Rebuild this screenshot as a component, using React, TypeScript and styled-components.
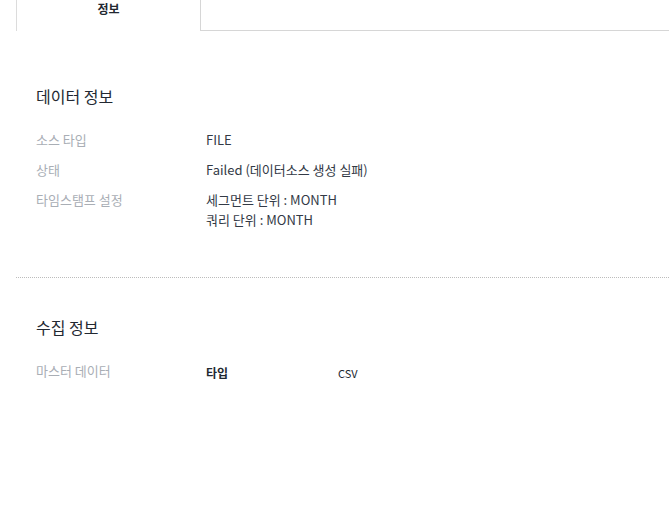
import styled, { createGlobalStyle } from "styled-components";

const GlobalStyle = createGlobalStyle`
    body {
        margin: 0;
        background: #fff;
        font-family: "Noto Sans CJK KR", "Noto Sans", sans-serif;
    }
`;

const Page = styled.div`
    width: 669px;
    height: 523px;
    padding-left: 16px;
    box-sizing: border-box;
    overflow: hidden;
`;

const TabBar = styled.div`
    display: flex;
    height: 31px;
`;

const Tab = styled.div`
    width: 185px;
    box-sizing: border-box;
    border-left: 1px solid #dcdcdc;
    border-right: 1px solid #d6d6d6;
    display: flex;
    justify-content: center;
    padding-top: 1px;
    font-size: 12px;
    font-weight: 700;
    line-height: 16px;
    color: #222831;
`;

const TabRest = styled.div`
    flex: 1;
    border-bottom: 1px solid #d6d6d6;
`;

const Section = styled.section<{ $top: number; $divider?: boolean }>`
    padding: ${p => p.$top}px 20px 47px;
    border-bottom: ${p => (p.$divider ? "1px dotted #bcbcbc" : "none")};
`;

const Heading = styled.h2`
    margin: 0 0 22px;
    font-size: 16px;
    font-weight: 400;
    line-height: 24px;
    color: #222831;
`;

const Row = styled.div`
    display: flex;
    margin-bottom: 10px;
    font-size: 13px;
    line-height: 20px;
    &:last-child {
        margin-bottom: 0;
    }
`;

const Label = styled.div`
    width: 170px;
    flex-shrink: 0;
    color: #a9aeb5;
`;

const Value = styled.div`
    color: #333a46;
`;

const SubTable = styled.div`
    display: flex;
    align-items: center;
    padding-top: 2px;
    font-size: 11px;
    color: #222831;
`;

const SubKey = styled.div`
    width: 132px;
    font-size: 12px;
    font-weight: 700;
`;

function App() {
    return (
        <>
            <GlobalStyle />
            <Page>
                <TabBar>
                    <Tab>정보</Tab>
                    <TabRest />
                </TabBar>
                <Section $top={53} $divider>
                    <Heading>데이터 정보</Heading>
                    <Row>
                        <Label>소스 타입</Label>
                        <Value>FILE</Value>
                    </Row>
                    <Row>
                        <Label>상태</Label>
                        <Value>Failed (데이터소스 생성 실패)</Value>
                    </Row>
                    <Row>
                        <Label>타임스탬프 설정</Label>
                        <Value>
                            세그먼트 단위 : MONTH
                            <br />
                            쿼리 단위 : MONTH
                        </Value>
                    </Row>
                </Section>
                <Section $top={37}>
                    <Heading>수집 정보</Heading>
                    <Row>
                        <Label>마스터 데이터</Label>
                        <SubTable>
                            <SubKey>타입</SubKey>
                            <div>CSV</div>
                        </SubTable>
                    </Row>
                </Section>
            </Page>
        </>
    );
}

export default App;
